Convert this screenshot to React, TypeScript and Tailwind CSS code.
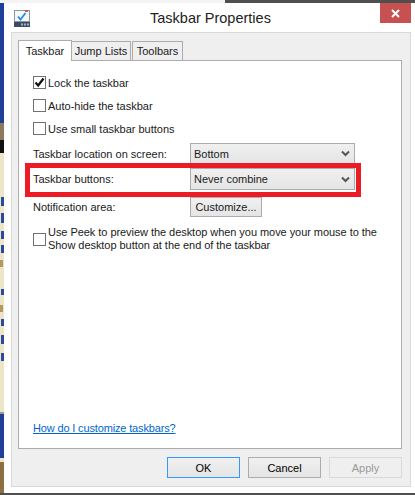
import React from "react";

const font = "font-['Liberation_Sans',sans-serif]";

const Checkbox = ({ checked = false }: { checked?: boolean }) => (
  <span className="flex h-[13px] w-[13px] shrink-0 items-center justify-center border border-[#707070] bg-white">
    {checked && (
      <svg width="11" height="11" viewBox="0 0 11 11">
        <path d="M1.5 5.5 L4.2 8.5 L9.5 1.5" fill="none" stroke="#111" strokeWidth="2.2" />
      </svg>
    )}
  </span>
);

const CheckRow = ({ label, checked }: { label: string; checked?: boolean }) => (
  <div className="flex h-[23px] items-center gap-[2px]">
    <Checkbox checked={checked} />
    <span>{label}</span>
  </div>
);

const Select = ({ value, className }: { value: string; className: string }) => (
  <div
    className={`flex w-[165px] items-center justify-between border border-[#acacac] bg-gradient-to-b from-[#f0f0f0] to-[#e5e5e5] pl-[3px] pr-[3px] ${className}`}
  >
    <span>{value}</span>
    <svg width="9" height="7" viewBox="0 0 9 7" className="mr-[1px]">
      <path d="M1 1.5 L4.5 5 L8 1.5" fill="none" stroke="#555" strokeWidth="2" />
    </svg>
  </div>
);

const FootButton = ({ label, variant }: { label: string; variant?: "default" | "disabled" }) => {
  const look =
    variant === "default"
      ? "border-[#3399ff] from-[#f0f0f0] to-[#e5e5e5] text-black"
      : variant === "disabled"
        ? "border-[#d9d9d9] from-[#efefef] to-[#efefef] text-[#9a9a9a]"
        : "border-[#acacac] from-[#f0f0f0] to-[#e5e5e5] text-black";
  return (
    <div className={`flex h-[21px] w-[73px] items-center justify-center border bg-gradient-to-b ${look}`}>
      {label}
    </div>
  );
};

// sliver of the desktop picture showing behind the window
const LeftEdge = () => (
  <div className="flex h-full w-[4px] shrink-0 flex-col">
    <div className="h-[120px] bg-[#1f3f98]" />
    <div className="h-[17px] bg-[#8d7a5c]" />
    <div className="h-[13px] bg-[#111111]" />
    <svg width="4" height="259" viewBox="0 0 4 259" className="block shrink-0 bg-[#ece5c8]">
      <g fill="#2a4aa0">
        <rect x="1" y="44" width="3" height="9" />
        <rect x="1" y="60" width="3" height="10" />
        <rect x="1" y="78" width="3" height="8" />
        <rect x="1" y="92" width="3" height="8" />
        <rect x="1" y="136" width="3" height="6" />
        <rect x="1" y="166" width="3" height="7" />
        <rect x="1" y="182" width="3" height="9" />
        <rect x="1" y="200" width="3" height="8" />
      </g>
      <g fill="#b39a5c">
        <rect x="0" y="107" width="3" height="7" />
        <rect x="0" y="152" width="3" height="7" />
      </g>
    </svg>
    <div className="h-[2px] bg-[#9a9a9a]" />
    <div className="h-[44px] bg-[#1f3f98]" />
    <div className="h-[4px] bg-[#ece5c8]" />
    <div className="flex-1 bg-[#8d7040]" />
  </div>
);

export default function App() {
  return (
    <div className={`flex h-[495px] w-[415px] flex-col overflow-hidden bg-white text-[11px] leading-[16px] text-[#1a1a1a] ${font}`}>
      <div className="flex h-[3px] shrink-0">
        <div className="w-[225px] bg-[#f4f4f4]" />
        <div className="flex-1 bg-[#4f4f4f]" />
      </div>
      <div className="flex min-h-0 flex-1">
        <LeftEdge />
        <div className="flex min-w-0 flex-1 flex-col">
          {/* title bar */}
          <div className="relative flex h-[29px] shrink-0 items-center">
            <svg width="17" height="17" viewBox="0 0 17 17" className="ml-[10px] mt-[1px]">
              <rect x="0.5" y="0.5" width="15" height="11" fill="#f4f6f8" stroke="#8a94a6" />
              <path d="M4 6.5 L6.5 9.5 L11.5 3" fill="none" stroke="#1e8fe6" strokeWidth="1.8" />
              <rect x="11" y="0" width="3" height="2" fill="#d9533c" />
              <rect x="0" y="12" width="16" height="5" fill="#3d4a63" />
              <rect x="7" y="13.5" width="2" height="2" fill="#a9b4c8" />
              <rect x="10" y="13.5" width="2" height="2" fill="#a9b4c8" />
              <rect x="13" y="13.5" width="2" height="2" fill="#a9b4c8" />
            </svg>
            <span className="ml-[119px] text-[14.5px] leading-[20px] text-[#222]">Taskbar Properties</span>
            <div className="absolute right-[4px] top-0 flex h-[20px] w-[31px] items-center justify-center bg-[#c75050]">
              <svg width="9" height="9" viewBox="0 0 9 9">
                <path d="M1 1 L8 8 M8 1 L1 8" stroke="#fff" strokeWidth="2" />
              </svg>
            </div>
          </div>
          {/* dialog body */}
          <div className="ml-[7px] mr-[4px] flex h-[455px] flex-col border border-[#d9d9d9] bg-[#efefef] pl-[6px] pr-[8px]">
            <div className="flex h-[27px] shrink-0 items-end pl-0">
              <div className="relative z-10 -mb-[1px] flex h-[21px] w-[54px] items-center justify-center border border-b-0 border-[#acacac] bg-white">
                Taskbar
              </div>
              <div className="flex h-[19px] w-[59px] items-center justify-center border border-l-0 border-b-0 border-[#acacac] bg-[#efefef]">
                Jump Lists
              </div>
              <div className="ml-[1px] flex h-[19px] w-[51px] items-center justify-center border border-b-0 border-[#acacac] bg-[#efefef]">
                Toolbars
              </div>
            </div>
            <div className="relative flex h-[389px] shrink-0 flex-col border border-[#acacac] bg-white pl-[14px] pt-[10px]">
              <CheckRow label="Lock the taskbar" checked />
              <CheckRow label="Auto-hide the taskbar" />
              <CheckRow label="Use small taskbar buttons" />
              <div className="mt-[3px] flex h-[21px] items-center">
                <span className="w-[157px]">Taskbar location on screen:</span>
                <Select value="Bottom" className="h-[21px]" />
              </div>
              <div className="mt-[4px] flex h-[22px] items-center">
                <span className="w-[157px]">Taskbar buttons:</span>
                <Select value="Never combine" className="h-[22px]" />
              </div>
              <div className="mt-[7px] flex h-[19px] items-center">
                <span className="w-[157px]">Notification area:</span>
                <div className="flex h-[20px] w-[72px] items-center justify-center border border-[#acacac] bg-gradient-to-b from-[#f0f0f0] to-[#e5e5e5]">
                  Customize...
                </div>
              </div>
              <div className="mt-[10px] flex items-center gap-[2px]">
                <Checkbox />
                <span className="whitespace-nowrap leading-[13px] tracking-[-0.05px]">
                  Use Peek to preview the desktop when you move your mouse to the
                  <br />
                  Show desktop button at the end of the taskbar
                </span>
              </div>
              <a className="mt-auto mb-[12px] tracking-[-0.15px] text-[#0066cc] underline">How do I customize taskbars?</a>
              {/* red highlight drawn over the dialog */}
              <div className="absolute left-[6px] top-[102px] h-[34px] w-[336px] border-[5px] border-[#ed1c24]" />
            </div>
            <div className="flex flex-1 items-start justify-end gap-[8px] pr-0 pt-[8px]">
              <FootButton label="OK" variant="default" />
              <FootButton label="Cancel" />
              <FootButton label="Apply" variant="disabled" />
            </div>
          </div>
          <div className="flex-1" />
        </div>
      </div>
      <div className="h-[2px] shrink-0 bg-[#4f4f4f]" />
    </div>
  );
}
